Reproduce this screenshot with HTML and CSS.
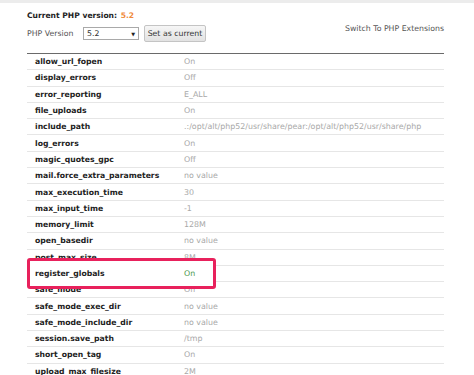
FILE: index.html
```html
<!DOCTYPE html>
<html>
<head>
<meta charset="utf-8">
<link rel="stylesheet" href="styles.css">
</head>
<body>
<div class="topband"></div>
<div class="page">
  <div class="header">
    <div class="header-left">
      <div class="current">Current PHP version: <span class="ver">5.2</span></div>
      <div class="picker">
        <span class="picker-label">PHP Version</span>
        <span class="select"><span>5.2</span><span class="arrow">▼</span></span>
        <span class="btn">Set as current</span>
      </div>
    </div>
    <div class="switch">Switch To PHP Extensions</div>
  </div>
  <div class="table">
    <div class="row"><span class="name">allow_url_fopen</span><span class="val">On</span></div>
    <div class="row"><span class="name">display_errors</span><span class="val">Off</span></div>
    <div class="row"><span class="name">error_reporting</span><span class="val">E_ALL</span></div>
    <div class="row"><span class="name">file_uploads</span><span class="val">On</span></div>
    <div class="row"><span class="name">include_path</span><span class="val">.:/opt/alt/php52/usr/share/pear:/opt/alt/php52/usr/share/php</span></div>
    <div class="row"><span class="name">log_errors</span><span class="val">On</span></div>
    <div class="row"><span class="name">magic_quotes_gpc</span><span class="val">Off</span></div>
    <div class="row"><span class="name">mail.force_extra_parameters</span><span class="val">no value</span></div>
    <div class="row"><span class="name">max_execution_time</span><span class="val">30</span></div>
    <div class="row"><span class="name">max_input_time</span><span class="val">-1</span></div>
    <div class="row"><span class="name">memory_limit</span><span class="val">128M</span></div>
    <div class="row"><span class="name">open_basedir</span><span class="val">no value</span></div>
    <div class="row"><span class="name">post_max_size</span><span class="val">8M</span></div>
    <div class="row highlight"><span class="name">register_globals</span><span class="val on">On</span></div>
    <div class="row"><span class="name">safe_mode</span><span class="val">Off</span></div>
    <div class="row"><span class="name">safe_mode_exec_dir</span><span class="val">no value</span></div>
    <div class="row"><span class="name">safe_mode_include_dir</span><span class="val">no value</span></div>
    <div class="row"><span class="name">session.save_path</span><span class="val">/tmp</span></div>
    <div class="row"><span class="name">short_open_tag</span><span class="val">On</span></div>
    <div class="row"><span class="name">upload_max_filesize</span><span class="val">2M</span></div>
  </div>
</div>
</body>
</html>
```
FILE: styles.css
```css
html, body {
  margin: 0;
  padding: 0;
  background: #fff;
  font-family: "DejaVu Sans", Verdana, sans-serif;
  overflow: hidden;
}
.topband {
  height: 3px;
  background: #ececec;
}
.page {
  width: 417px;
  margin-left: 27px;
}
.header {
  display: flex;
  justify-content: space-between;
  align-items: flex-start;
  height: 50px;
}
.current {
  margin-top: 8px;
  font-weight: bold;
  font-size: 7.6px;
  color: #222;
  line-height: 10px;
}
.current .ver {
  color: #f08a3a;
  margin-left: 1px;
}
.picker {
  display: flex;
  align-items: center;
  margin-top: 4px;
  font-size: 7.8px;
  color: #555;
}
.picker-label {
  width: 56px;
}
.select {
  display: flex;
  justify-content: space-between;
  align-items: center;
  box-sizing: border-box;
  width: 56px;
  height: 13px;
  padding: 0 3px 0 3px;
  border: 1px solid #a9a9a9;
  color: #333;
  font-size: 7.8px;
}
.select .arrow {
  font-size: 5px;
  color: #222;
}
.btn {
  box-sizing: border-box;
  margin-left: 5px;
  width: 62px;
  height: 17px;
  display: flex;
  align-items: center;
  justify-content: center;
  border: 1px solid #c4c4c4;
  border-radius: 2px;
  background: linear-gradient(#f6f6f6, #e2e2e2);
  color: #333;
  font-size: 7.8px;
}
.switch {
  margin-top: 21px;
  font-size: 7.8px;
  color: #555;
}
.table {
  border-top: 1px solid #6a6a6a;
}
.row {
  display: flex;
  align-items: center;
  height: 15.3px;
  border-bottom: 1px solid #e6e6e6;
  font-size: 7.9px;
}
.name {
  width: 149px;
  flex: none;
  padding-left: 8px;
  font-weight: bold;
  color: #222;
  font-size: 7.7px;
}
.val {
  color: #a8a8a8;
  white-space: nowrap;
}
.val.on {
  color: #4e9a4e;
}
.highlight {
  position: relative;
}
.highlight::before {
  content: "";
  position: absolute;
  left: 0;
  top: -8px;
  width: 189px;
  height: 31px;
  box-sizing: border-box;
  border: 3px solid #e8215c;
  border-radius: 3px;
  background: #fff;
  z-index: 1;
}
.highlight .name,
.highlight .val {
  position: relative;
  z-index: 2;
}
```
